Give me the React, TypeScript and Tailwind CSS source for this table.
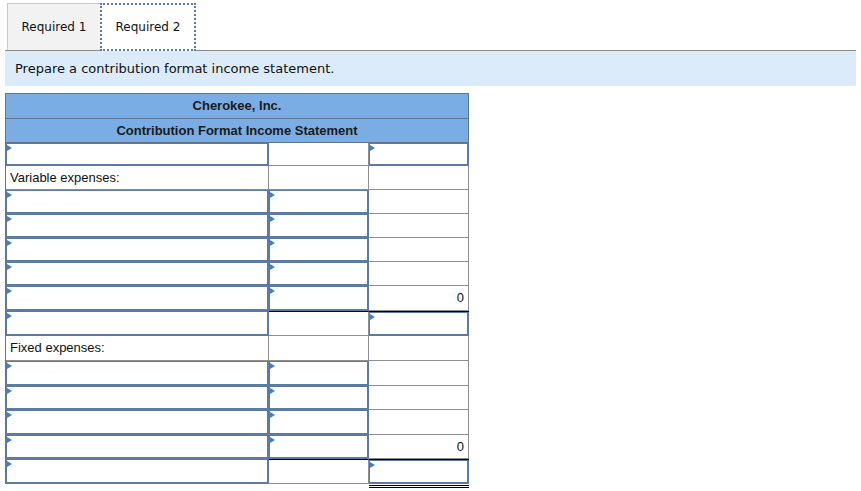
import React from "react";

type Cell = { input?: boolean; text?: string; label?: boolean; right?: boolean; topBlack?: boolean; dbl?: boolean };
type Row = { h: number; cells: Cell[] };

const I: Cell = { input: true };
const P: Cell = {};

const rows: Row[] = [
  { h: 23, cells: [I, P, I] },
  { h: 24, cells: [{ text: "Variable expenses:", label: true }, P, P] },
  { h: 24, cells: [I, I, P] },
  { h: 24, cells: [I, I, P] },
  { h: 24, cells: [I, I, P] },
  { h: 24, cells: [I, I, P] },
  { h: 25, cells: [I, I, { text: "0", right: true }] },
  { h: 25, cells: [I, { topBlack: true }, { input: true, topBlack: true }] },
  { h: 25, cells: [{ text: "Fixed expenses:", label: true }, P, P] },
  { h: 25, cells: [I, I, P] },
  { h: 24, cells: [I, I, P] },
  { h: 25, cells: [I, I, P] },
  { h: 24, cells: [I, I, { text: "0", right: true }] },
  { h: 25, cells: [I, { topBlack: true }, { input: true, topBlack: true, dbl: true }] },
];

const widths = ["w-[263px]", "w-[100px]", "flex-1"];

function Tri() {
  return (
    <div className="absolute top-[1px] left-0 w-0 h-0 border-y-[3px] border-y-transparent border-l-[5px] border-l-[#3f7fcf]" />
  );
}

function CellView({ c, idx, h }: { c: Cell; idx: number; h: number }) {
  const w = widths[idx];
  if (c.input) {
    return (
      <div
        className={`${w} relative ${c.topBlack ? "border-t border-t-black" : ""}`}
        style={{ height: h }}
      >
        <div className="h-full w-full border-t border-l border-r-2 border-b-2 border-[#5b7ba5] relative">
          <Tri />
        </div>
        {c.dbl && (
          <div className="absolute left-0 right-0 bottom-[-4px] h-[3px] border-y border-black" />
        )}
      </div>
    );
  }
  return (
    <div
      className={`${w} flex items-center border-r border-b border-[#8e8e8e] ${
        c.topBlack ? "border-t border-t-black" : ""
      } ${c.right ? "justify-end pr-[4px]" : "pl-[4px]"} text-[13px] text-[#111]`}
      style={{ height: h, fontFamily: '"Liberation Sans", Arial, sans-serif' }}
    >
      {c.text}
    </div>
  );
}

export default function App() {
  return (
    <div className="w-[861px] h-[491px] bg-white relative overflow-hidden" style={{ fontFamily: '"DejaVu Sans", Verdana, sans-serif' }}>
      <div className="flex pl-[7px] pt-[3px] h-[50px] items-end">
        <div className="w-[93px] h-[47px] bg-[#f2f2f2] border-l border-t border-[#c9c9c9] flex items-center justify-center text-[12px] text-[#111]">
          Required 1
        </div>
        <div className="w-[96px] h-[48px] mb-[-1px] bg-white border-2 border-dotted border-[#5b7ba5] flex items-center justify-center text-[12px] text-[#111] relative z-10">
          Required 2
        </div>
      </div>
      <div className="ml-[5px] w-[851px] h-px bg-[#8d8d8d]" />
      <div className="ml-[5px] w-[851px] h-[35px] bg-[#dcebfa] pl-[10px] flex items-center text-[13px] text-[#111]">
        Prepare a contribution format income statement.
      </div>
      <div
        className="ml-[5px] mt-[7px] w-[464px] border-l border-t border-[#61758f]"
        style={{ fontFamily: '"Liberation Sans", Arial, sans-serif' }}
      >
        <div className="h-[25px] bg-[#7aade4] border-b border-r border-[#5f7590] flex items-center justify-center font-bold text-[13px] text-[#1a1a1a]">
          Cherokee, Inc.
        </div>
        <div className="h-[24px] bg-[#7aade4] border-b border-r border-[#5f7590] flex items-center justify-center font-bold text-[13px] text-[#1a1a1a]">
          Contribution Format Income Statement
        </div>
        {rows.map((r, ri) => (
          <div key={ri} className="flex">
            {r.cells.map((c, ci) => (
              <CellView key={ci} c={c} idx={ci} h={r.h} />
            ))}
          </div>
        ))}
      </div>
    </div>
  );
}
